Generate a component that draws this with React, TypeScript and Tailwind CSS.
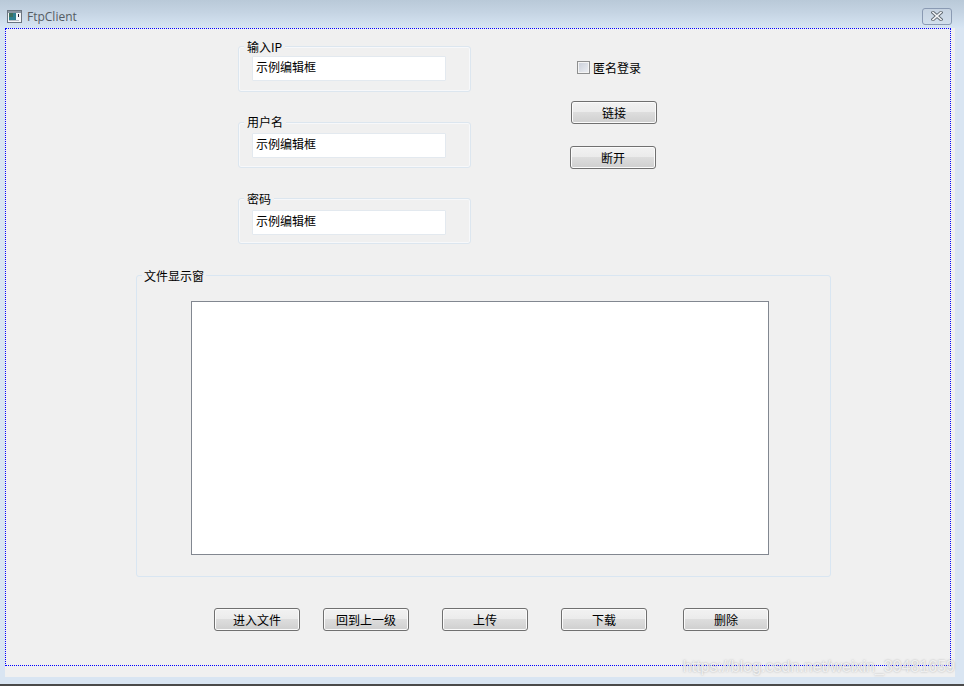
const cjk = "font-['Noto_Sans_CJK_SC','Liberation_Sans',sans-serif]";

function Btn({ label, className = "" }: { label: string; className?: string }) {
  return (
    <button
      className={`w-[86px] h-[23px] shrink-0 rounded-[3px] border border-[#707070] p-0 text-[12px] leading-[21px] text-black shadow-[inset_0_0_0_1px_#fbfbfb] bg-[linear-gradient(to_bottom,#f2f2f2_0%,#ebebeb_48%,#dddddd_50%,#cfcfcf_100%)] ${className}`}
    >
      {label}
    </button>
  );
}

function Field({ title, className = "", labelClass = "top-[-7px]" }: { title: string; className?: string; labelClass?: string }) {
  return (
    <div className={`relative w-[233px] h-[46px] rounded-[3px] border border-[#dce6ef] pl-[13px] shadow-[inset_0_0_0_1px_#f7f8fa] ${className}`}>
      <span className={`absolute left-[5px] bg-[#f0f0f0] px-[3px] text-[12px] leading-[14px] text-black ${labelClass}`}>{title}</span>
      <div className="w-[194px] h-[25px] rounded-[1px] border border-[#e3e9ef] bg-white pl-[3px] text-[12px] leading-[20px] text-black">示例编辑框</div>
    </div>
  );
}

export default function App() {
  return (
    <div className={`w-[964px] h-[686px] flex flex-col overflow-hidden relative bg-[#d9e5f2] ${cjk}`}>
      <header className="h-[28px] shrink-0 flex items-center pt-[4px] pl-[7px] pr-[12px] bg-[linear-gradient(to_bottom,#b9c9d8_0%,#c5d4e3_45%,#d7e5f3_100%)]">
        <svg width="15" height="13" viewBox="0 0 15 13" className="shrink-0">
          <rect x="0.5" y="0.5" width="14" height="12" fill="#f4f6f8" stroke="#6b7580" />
          <rect x="1" y="1" width="13" height="2" fill="#8b97a3" />
          <rect x="2" y="3" width="7" height="7" fill="#2f7f8f" />
          <rect x="2" y="3" width="4" height="4" fill="#3d6f5d" />
          <rect x="11" y="4" width="1" height="3" fill="#223" />
          <rect x="2" y="10" width="10" height="1" fill="#b7bec6" />
        </svg>
        <span className="ml-[5px] mt-[2px] font-['Open_Sans',sans-serif] text-[12px] text-[#555c63]">FtpClient</span>
        <div className="ml-auto w-[30px] h-[17px] rounded-[3px] border border-[#8a9ab3] bg-[linear-gradient(to_bottom,#c6d3e1,#d2dfec)] flex items-center justify-center">
          <svg width="12" height="10" viewBox="0 0 12 10">
            <path d="M2 1.5 L10 8.5 M10 1.5 L2 8.5" stroke="#5f6870" strokeWidth="3.4" strokeLinecap="square" />
            <path d="M2 1.5 L10 8.5 M10 1.5 L2 8.5" stroke="#f4f6f8" strokeWidth="1.6" strokeLinecap="square" />
          </svg>
        </div>
      </header>

      <div className="flex-1 min-h-0 flex pl-[5px] pr-[9px]">
        <main className="flex-1 bg-[#f0f0f0] pr-[4px] pb-[11px] flex">
          <div className="flex-1 border border-dotted border-[#0000ff] flex flex-col">
            <section className="flex pt-[17px] pl-[232px]">
              <div className="flex flex-col gap-[30px]">
                <Field title="输入IP" className="pt-[9px]" />
                <Field title="用户名" className="pt-[10px]" labelClass="top-[-8px]" />
                <Field title="密码" className="pt-[11px]" />
              </div>
              <div className="ml-[99px] flex flex-col">
                <label className="flex items-center ml-[7px] mt-[15px] h-[13px] text-[12px] text-black">
                  <span className="w-[13px] h-[13px] shrink-0 border border-[#8e8f8f] bg-[linear-gradient(135deg,#c9ced8,#eef0f4)] shadow-[inset_0_0_0_1px_#f4f4f4]" />
                  <span className="ml-[3px]">匿名登录</span>
                </label>
                <Btn label="链接" className="mt-[27px] ml-px" />
                <Btn label="断开" className="mt-[22px]" />
              </div>
            </section>

            <section className="relative ml-[130px] mt-[31px] w-[695px] h-[302px] shrink-0 rounded-[3px] border border-[#d9e6f2] pl-[54px] pt-[25px]">
              <span className="absolute left-[5px] top-[-7px] bg-[#f0f0f0] px-[2px] text-[12px] leading-[14px] text-black">文件显示窗</span>
              <div className="w-[578px] h-[254px] border border-[#828790] bg-white" />
            </section>

            <footer className="flex pl-[208px] mt-[31px]">
              <Btn label="进入文件" />
              <Btn label="回到上一级" className="ml-[23px]" />
              <Btn label="上传" className="ml-[33px]" />
              <Btn label="下载" className="ml-[33px]" />
              <Btn label="删除" className="ml-[36px]" />
            </footer>
          </div>
        </main>
      </div>

      <div className="h-[2px] shrink-0 mt-[7px] bg-[#4a4a4a]" />
      <span className="absolute right-[9px] top-[657px] font-['Liberation_Sans',sans-serif] text-[16px] leading-[20px] text-white/70 [text-shadow:0_0_2px_rgba(130,130,130,0.6)]">https://blog.csdn.net/weixin_39481659</span>
    </div>
  );
}
